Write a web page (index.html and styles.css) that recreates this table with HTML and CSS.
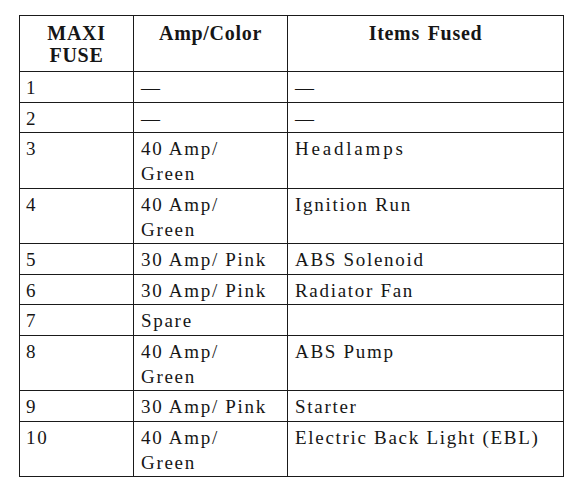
FILE: index.html
```html
<!DOCTYPE html>
<html>
<head>
<meta charset="utf-8">
<link rel="stylesheet" href="styles.css">
</head>
<body>
<table class="fuse-table">
  <colgroup>
    <col class="c1"><col class="c2"><col class="c3">
  </colgroup>
  <thead>
    <tr><th>MAXI<br>FUSE</th><th>Amp/Color</th><th>Items Fused</th></tr>
  </thead>
  <tbody>
    <tr><td>1</td><td>—</td><td>—</td></tr>
    <tr><td>2</td><td>—</td><td>—</td></tr>
    <tr><td>3</td><td>40 Amp/<br>Green</td><td class="wide">Headlamps</td></tr>
    <tr><td>4</td><td>40 Amp/<br>Green</td><td>Ignition Run</td></tr>
    <tr><td>5</td><td>30 Amp/ Pink</td><td>ABS Solenoid</td></tr>
    <tr><td>6</td><td>30 Amp/ Pink</td><td>Radiator Fan</td></tr>
    <tr><td>7</td><td>Spare</td><td></td></tr>
    <tr><td>8</td><td>40 Amp/<br>Green</td><td>ABS Pump</td></tr>
    <tr><td>9</td><td>30 Amp/ Pink</td><td>Starter</td></tr>
    <tr><td>10</td><td>40 Amp/<br>Green</td><td>Electric Back Light (EBL)</td></tr>
  </tbody>
</table>
</body>
</html>
```
FILE: styles.css
```css
html, body {
  margin: 0;
  padding: 0;
  background: #ffffff;
}
body {
  padding: 15px 0 0 19px;
  font-family: "Liberation Serif", "Times New Roman", serif;
  color: #161616;
}
.fuse-table {
  border-collapse: collapse;
  table-layout: fixed;
  width: 544px;
}
.c1 { width: 114px; }
.c2 { width: 154px; }
.c3 { width: 276px; }
.fuse-table th,
.fuse-table td {
  border: 1px solid #1a1a1a;
  vertical-align: top;
  text-align: left;
}
.fuse-table th {
  font-size: 20px;
  font-weight: bold;
  line-height: 22px;
  letter-spacing: 0.7px;
  word-spacing: 2px;
  text-align: center;
  padding: 6px 4px 5px 4px;
  height: 44px;
}
.fuse-table td {
  font-size: 19px;
  line-height: 25px;
  letter-spacing: 1.7px;
  padding: 3px 4px 1.5px 7px;
  height: 25px;
  white-space: nowrap;
}
.fuse-table td:first-child {
  padding-left: 6px;
}
.fuse-table td.wide {
  letter-spacing: 2.8px;
}
```
